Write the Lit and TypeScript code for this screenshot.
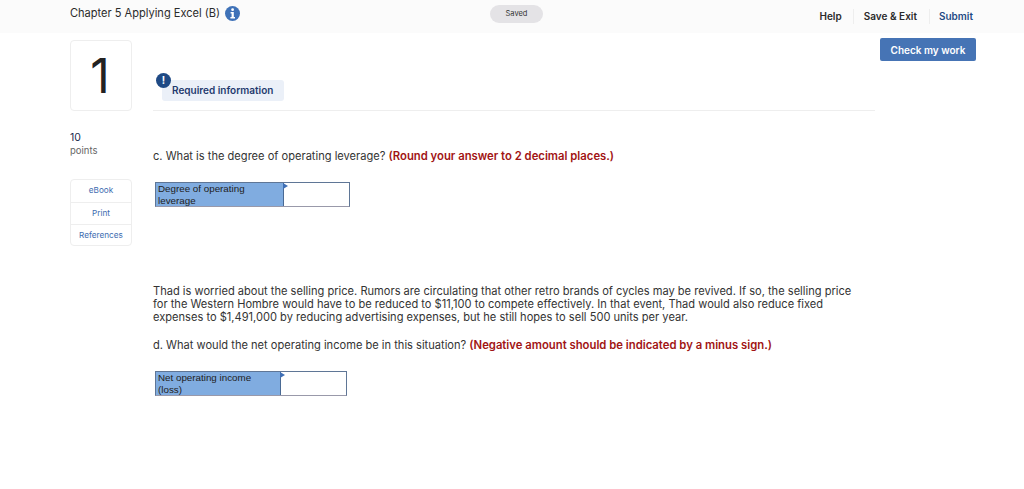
import { LitElement, html, css } from "lit";
import { customElement } from "lit/decorators.js";

@customElement("app-root")
export class AppRoot extends LitElement {
  static styles = css`
    :host { display: block; width: 1024px; height: 489px; background: #fff; overflow: hidden; font-family: Inter, Lato, sans-serif; color: #333; }
    * { box-sizing: border-box; }
    .top { height: 33px; background: #fbfbfb; display: grid; grid-template-columns: 420px 53px 1fr; column-gap: 0; align-items: center; padding: 0 51px 0 70px; }
    .title { display: flex; align-items: center; gap: 5px; font-size: 11.05px; color: #2b2b2b; margin-top: -7px; }
    .saved { height: 18px; margin-top: -6px; background: #e4e3e6; border-radius: 9px; font-size: 7.5px; display: flex; align-items: center; justify-content: center; color: #333; }
    .nav { display: flex; justify-content: flex-end; align-items: center; font-size: 10px; font-weight: 600; color: #2b2b2b; }
    .nav span { padding: 0 12px 0 10px; height: 15px; line-height: 15px; border-left: 1px solid #eee; }
    .nav span:first-child { border-left: 0; padding-right: 11px; }
    .nav span:last-child { color: #1f4a85; padding-right: 0; padding-left: 9px; }
    .actions { display: flex; justify-content: flex-end; padding: 5px 48px 0 0; height: 28px; }
    .check { width: 96px; height: 23px; background: #4674b5; color: #fff; font-size: 10px; font-weight: 600; border-radius: 2px; display: flex; align-items: center; justify-content: center; }
    .page { display: grid; grid-template-columns: 83px 722px; padding-left: 70px; margin-top: -21px; }
    .num { width: 62px; height: 71px; border: 1px solid #eee; border-radius: 4px; display: flex; align-items: center; justify-content: center; font-size: 48px; font-weight: 400; color: #222; padding-right: 2px; }
    .pts { margin-top: 20px; font-size: 9.5px; line-height: 13px; color: #666; }
    .pts b { display: block; font-weight: 400; font-size: 10.5px; color: #1c2c4c; }
    .tools { margin-top: 22px; width: 62px; border: 1px solid #eee; border-radius: 4px; font-size: 8.2px; color: #3e6cb0; text-align: center; }
    .tools div { height: 22px; line-height: 21px; border-top: 1px solid #eee; }
    .tools div:first-child { border-top: 0; }
    .tools div:last-child { height: 21px; line-height: 20px; }
    .req { height: 71px; border-bottom: 1px solid #eee; position: relative; padding: 38px 0 0 9px; }
    .pill { display: inline-block; width: 122px; height: 21px; line-height: 21px; background: #ebf0f8; border-radius: 3px; font-size: 10px; font-weight: 600; color: #1f3a6e; padding-left: 10px; }
    .bang { position: absolute; left: 3px; top: 33px; width: 15px; height: 15px; border-radius: 50%; background: #1f4a85; color: #fff; font-size: 10px; font-weight: 700; text-align: center; line-height: 15px; }
    p { margin: 0; font-size: 11.1px; line-height: 13px; color: #333; }
    p em { font-style: normal; font-weight: 600; font-size: 11.3px; color: #a11414; }
    .c { margin-top: 39px; }
    .tbl { display: flex; margin-left: 2px; border: 1px solid #5f7696; border-bottom-color: #99a; height: 25px; position: relative; overflow: hidden; }
    .lab { background: #80ace0; font-family: "Liberation Sans", sans-serif; font-size: 9.8px; line-height: 11.5px; color: #222; padding: 0 25px 0 2px; border-right: 1px solid #4a6a94; }
    .in { background: #fff; }
    .tri { position: absolute; top: 0; width: 0; height: 0; border-left: 5px solid #3f6fb5; border-top: 3px solid transparent; border-bottom: 3px solid transparent; }
    .t1 { width: 195px; margin-top: 19px; }
    .t1 .lab { width: 128px; } .t1 .in { flex: 1; } .t1 .tri { left: 127px; }
    .para { margin-top: 78px; }
    .d { margin-top: 15px; }
    .t2 { width: 192px; margin-top: 19px; }
    .t2 .lab { width: 125px; } .t2 .in { flex: 1; } .t2 .tri { left: 124px; }
  `;
  render() {
    return html`
      <div class="top">
        <div class="title">Chapter 5 Applying Excel (B)
          <svg width="15" height="15" viewBox="0 0 15 15"><circle cx="7.5" cy="7.5" r="7.5" fill="#3f72b8"/><circle cx="7.6" cy="3.7" r="1.4" fill="#fff"/><path d="M5.6 6h3.2v5h1.2v1.4H5.4V11h1.2V7.4h-1z" fill="#fff"/></svg>
        </div>
        <div class="saved">Saved</div>
        <div class="nav"><span>Help</span><span>Save &amp; Exit</span><span>Submit</span></div>
      </div>
      <div class="actions"><div class="check">Check my work</div></div>
      <div class="page">
        <div>
          <div class="num">1</div>
          <div class="pts"><b>10</b>points</div>
          <div class="tools"><div>eBook</div><div>Print</div><div>References</div></div>
        </div>
        <div>
          <div class="req"><span class="bang">!</span><span class="pill">Required information</span></div>
          <p class="c">c. What is the degree of operating leverage? <em>(Round your answer to 2 decimal places.)</em></p>
          <div class="tbl t1"><div class="lab">Degree of operating leverage</div><div class="in"></div><i class="tri"></i></div>
          <p class="para">Thad is worried about the selling price. Rumors are circulating that other retro brands of cycles may be revived. If so, the selling price<br>for the Western Hombre would have to be reduced to $11,100 to compete effectively. In that event, Thad would also reduce fixed<br>expenses to $1,491,000 by reducing advertising expenses, but he still hopes to sell 500 units per year.</p>
          <p class="d">d. What would the net operating income be in this situation? <em>(Negative amount should be indicated by a minus sign.)</em></p>
          <div class="tbl t2"><div class="lab">Net operating income (loss)</div><div class="in"></div><i class="tri"></i></div>
        </div>
      </div>
    `;
  }
}
